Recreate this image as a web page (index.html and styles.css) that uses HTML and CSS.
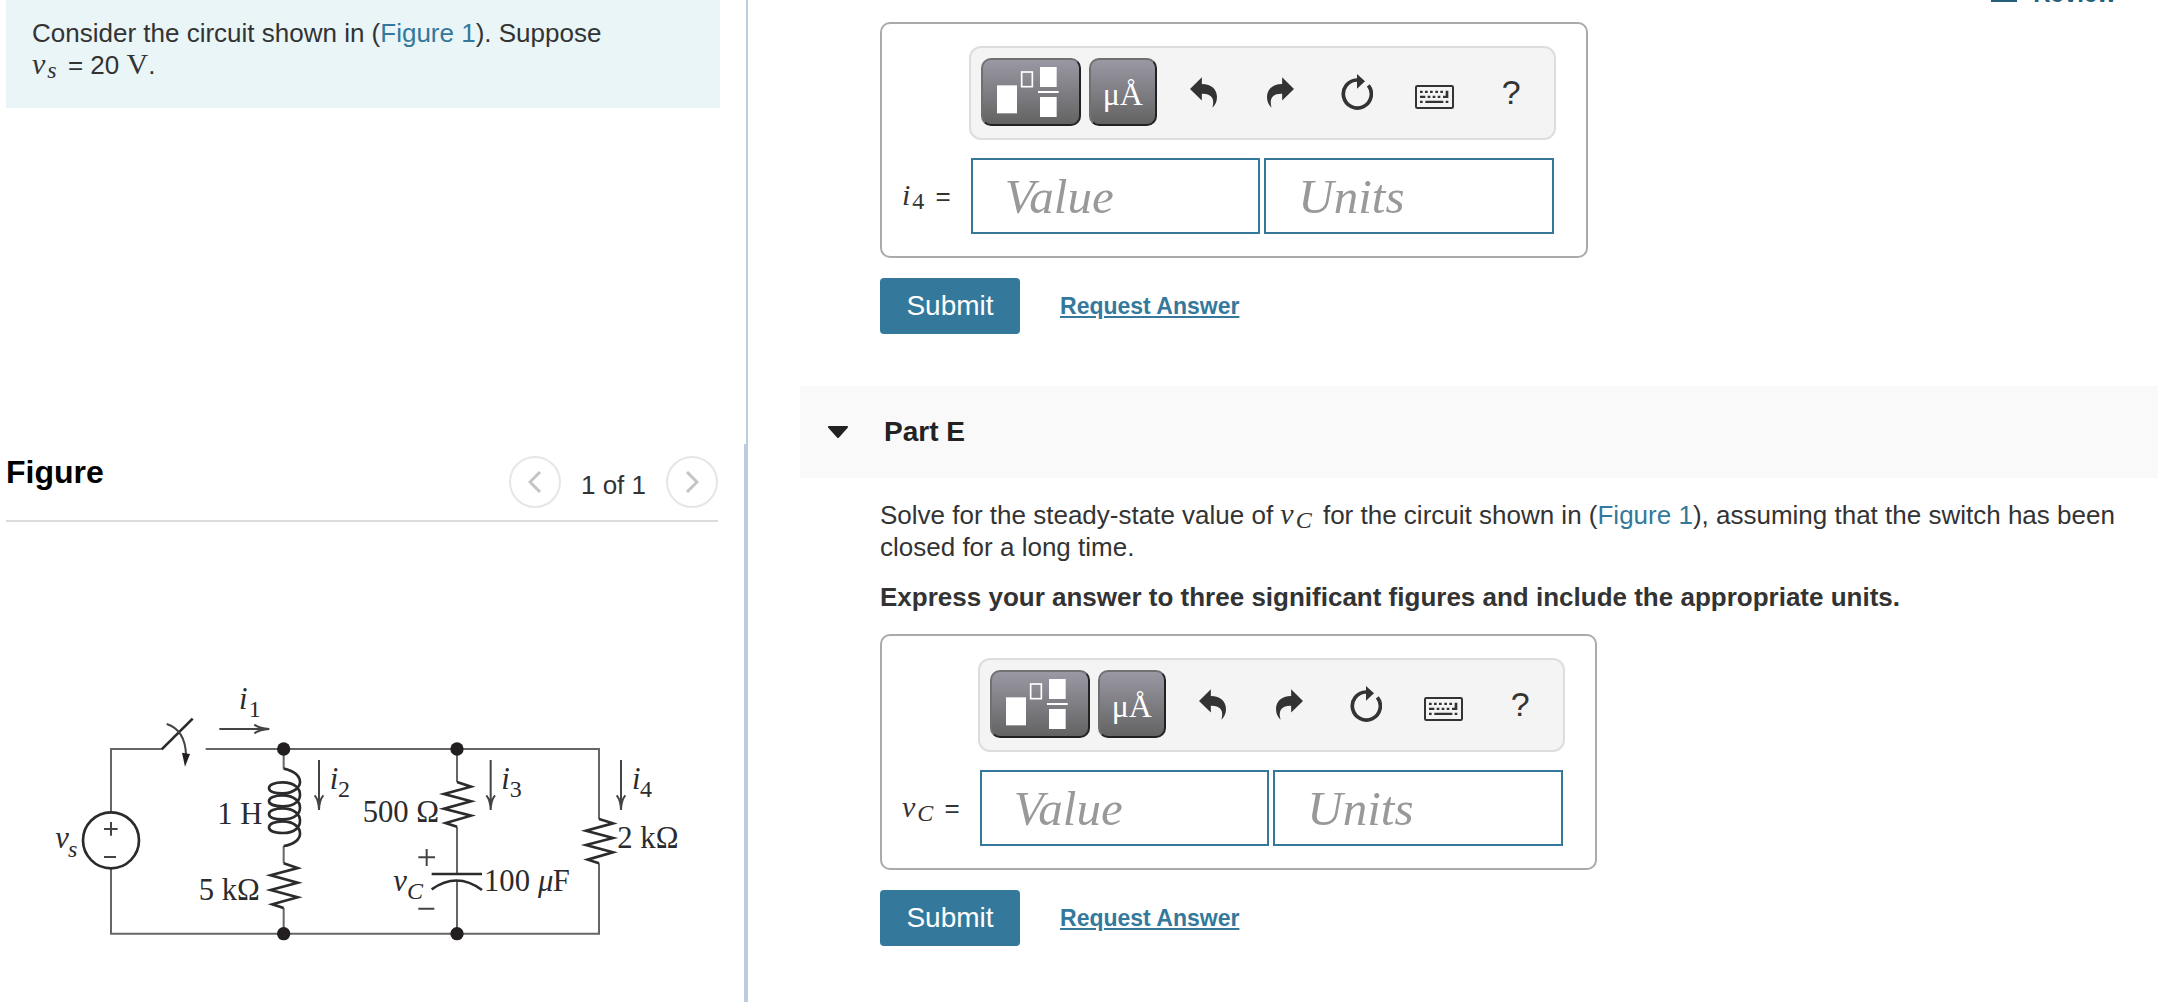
FILE: index.html
```
<!DOCTYPE html>
<html lang="en">

<head>
    <meta charset="UTF-8">
    <meta name="viewport" content="width=device-width, initial-scale=1.0">
    <title>Circuit problem</title>
    <link rel="stylesheet" href="styles.css">
</head>

<body>
    <!-- shared toolbar icons -->
    <svg class="sprite" aria-hidden="true">
        <symbol id="icon-template" viewBox="0 0 204 150">
            <rect x="0" y="55" width="60" height="84" fill="#fff" />
            <rect x="74" y="15" width="32" height="44" fill="none" stroke="#fff" stroke-width="5" />
            <rect x="129" y="0" width="50" height="60" fill="#fff" />
            <rect x="123" y="72" width="62" height="6" fill="#fff" />
            <rect x="129" y="90" width="50" height="60" fill="#fff" />
        </symbol>
        <symbol id="icon-undo" viewBox="0 0 82 92">
            <path d="M0 35L36 0V20C66 20 82 38 82 60C82 74 77 84 68 92C76 66 66 49 36 50V70Z" />
        </symbol>
        <symbol id="icon-redo" viewBox="0 0 82 92">
            <path d="M82 35L46 0V20C16 20 0 38 0 60C0 74 5 84 14 92C6 66 16 49 46 50V70Z" />
        </symbol>
        <symbol id="icon-reset" viewBox="0 0 96 108">
            <path d="M82 34A42 42 0 1 1 48 18" fill="none" stroke="#333" stroke-width="11" />
            <path d="M48 0L72 22L48 44Z" />
        </symbol>
        <symbol id="icon-keyboard" viewBox="0 0 117 72">
            <rect x="3" y="3" width="111" height="66" rx="4" fill="none" stroke="#333" stroke-width="6" />
            <path d="M15 17h8v7h-8zM30 17h8v7h-8zM45 17h8v7h-8zM61 17h8v7h-8zM76 17h8v7h-8zM92 17h8v22h-16v-7h8z" />
            <path d="M15 32h16v7h-16zM38 32h8v7h-8zM53 32h8v7h-8zM68 32h8v7h-8z" />
            <path d="M15 47h8v7h-8zM31 47h54v7h-54zM92 47h8v7h-8z" />
        </symbol>
    </svg>

    <div class="app">
        <div class="left">
            <div class="question">
                <p class="intro">
                    Consider the circuit shown in (<a href="#figure">Figure 1</a>). Suppose
                    <br>
                    <span class="math">v<sub>s</sub></span> = 20 <span class="unit">V</span>.
                </p>
            </div>
            <div class="figure" id="figure">
                <div class="figure-header">
                    <h2>Figure</h2>
                    <div class="pager">
                        <button type="button" class="round" aria-label="Previous figure">
                            <svg viewBox="0 0 14 22" width="14" height="22"><path d="M12 1L2 11L12 21" /></svg>
                        </button>
                        <span>1 of 1</span>
                        <button type="button" class="round" aria-label="Next figure">
                            <svg viewBox="0 0 14 22" width="14" height="22"><path d="M2 1L12 11L2 21" /></svg>
                        </button>
                    </div>
                </div>
                <svg class="circuit" viewBox="0 0 1980 870" role="img" aria-label="RLC circuit with a switch">
                    <!-- wires -->
                    <g class="wire">
                        <path d="M213 425V237H365M497 237H1677V447M1677 580V791H213V597" />
                        <path d="M731 237V296M731 528V580M731 714V791" />
                        <path d="M1251 237V336M1251 470V610M1251 632V791" />
                    </g>
                    <!-- source, switch, coil, resistors, capacitor -->
                    <g class="part">
                        <circle cx="213" cy="511" r="84" />
                        <path d="M365 238L458 146" />
                        <path d="M731 296C762 302 780 318 780 336C780 350 764 370 728 370C702 370 687 364 687 354C687 344 704 337 728 337C764 337 780 356 780 374C780 392 764 409 728 409C702 409 687 402 687 393C687 383 704 376 728 376C764 376 780 396 780 413C780 431 764 448 728 448C702 448 687 442 687 432C687 422 704 415 728 415C764 415 780 435 780 452C780 472 764 489 728 489C702 489 687 482 687 472C687 461 704 454 728 454C764 454 780 474 780 491C780 508 762 523 731 528" />
                        <path d="M731 580L773 594L692 616L773 638L692 660L773 682L697 703L731 714" />
                        <path d="M1251 336L1293 350L1212 372L1293 394L1212 416L1293 437L1217 459L1251 470" />
                        <path d="M1677 447L1719 460L1638 482L1719 504L1638 525L1719 547L1643 569L1677 580" />
                        <path d="M1175 612H1326M1175 658Q1251 604 1326 660" />
                    </g>
                    <!-- arrows and signs -->
                    <g class="thin">
                        <path d="M380 162Q436 180 438 255" />
                        <path d="M538 177H688M643 164Q660 176 688 177Q660 178 643 190" />
                        <path d="M837 270V420M824 376Q836 390 837 420Q838 390 850 376" />
                        <path d="M1352 270V420M1339 376Q1351 390 1352 420Q1353 390 1365 376" />
                        <path d="M1743 270V420M1730 376Q1742 390 1743 420Q1744 390 1756 376" />
                        <path d="M192 477H233M213 456V497M192 561H228" />
                        <path d="M1135 562H1185M1160 537V588M1135 716H1183" />
                    </g>
                    <g class="solid">
                        <path d="M426 248L450 252L435 290Z" />
                        <circle cx="731" cy="237" r="20" />
                        <circle cx="731" cy="791" r="20" />
                        <circle cx="1251" cy="237" r="20" />
                        <circle cx="1251" cy="791" r="20" />
                    </g>
                    <g class="names">
                        <text class="var" x="597" y="118">i</text><text class="sub" x="626" y="142">1</text>
                        <text class="var" x="869" y="357">i</text><text class="sub" x="894" y="382">2</text>
                        <text class="var" x="1384" y="357">i</text><text class="sub" x="1409" y="382">3</text>
                        <text class="var" x="1776" y="357">i</text><text class="sub" x="1800" y="382">4</text>
                        <text class="var" x="46" y="533">v</text><text class="sub var" x="84" y="562">s</text>
                        <text class="var" x="1060" y="664">v</text><text class="sub var" x="1101" y="688">C</text>
                        <text x="532" y="462">1 H</text>
                        <text x="476" y="689">5 kΩ</text>
                        <text x="968" y="455">500 Ω</text>
                        <text x="1732" y="533">2 kΩ</text>
                        <text x="1332" y="664">100</text>
                        <text class="var" x="1494" y="664">μ</text>
                        <text x="1538" y="664">F</text>
                    </g>
                </svg>
            </div>
        </div>

        <div class="right">
            <div class="tools">
                <a href="#review" class="review">
                    <svg viewBox="0 0 26 24" width="26" height="24" aria-hidden="true"><path d="M0 0H26V24H0Z" /></svg>
                    Review
                </a>
            </div>

            <div class="part-body">
                <form class="answer">
                    <div class="toolbar">
                        <button type="button" class="dark wide" aria-label="Templates"><svg width="68" height="50"><use href="#icon-template" /></svg></button>
                        <button type="button" class="dark">μÅ</button>
                        <div class="actions">
                            <button type="button" aria-label="Undo"><svg width="27" height="31"><use href="#icon-undo" /></svg></button>
                            <button type="button" aria-label="Redo"><svg width="27" height="31"><use href="#icon-redo" /></svg></button>
                            <button type="button" aria-label="Reset"><svg width="32" height="36"><use href="#icon-reset" /></svg></button>
                            <button type="button" class="keyboard" aria-label="Keyboard shortcuts"><svg width="39" height="24"><use href="#icon-keyboard" /></svg></button>
                            <button type="button">?</button>
                        </div>
                    </div>
                    <label for="i4-value"><span class="math">i<sub class="num">4</sub></span> =</label>
                    <div class="fields">
                        <input type="text" id="i4-value" placeholder="Value">
                        <input type="text" id="i4-units" placeholder="Units" aria-label="Units">
                    </div>
                </form>
                <div class="submit-row">
                    <button type="button" class="submit">Submit</button>
                    <a href="#answer-d">Request Answer</a>
                </div>
            </div>

            <div class="part-header">
                <svg viewBox="0 0 20 12" width="20" height="12" aria-hidden="true"><path d="M1 1H19L10 11Z" /></svg>
                <h2>Part E</h2>
            </div>

            <div class="part-body">
                <p>Solve for the steady-state value of <span class="math">v<sub>C</sub></span> for the circuit shown in (<a href="#figure">Figure 1</a>), assuming that the switch has been closed for a long time.</p>
                <p class="instructions">Express your answer to three significant figures and include the appropriate units.</p>
                <form class="answer">
                    <div class="toolbar">
                        <button type="button" class="dark wide" aria-label="Templates"><svg width="68" height="50"><use href="#icon-template" /></svg></button>
                        <button type="button" class="dark">μÅ</button>
                        <div class="actions">
                            <button type="button" aria-label="Undo"><svg width="27" height="31"><use href="#icon-undo" /></svg></button>
                            <button type="button" aria-label="Redo"><svg width="27" height="31"><use href="#icon-redo" /></svg></button>
                            <button type="button" aria-label="Reset"><svg width="32" height="36"><use href="#icon-reset" /></svg></button>
                            <button type="button" class="keyboard" aria-label="Keyboard shortcuts"><svg width="39" height="24"><use href="#icon-keyboard" /></svg></button>
                            <button type="button">?</button>
                        </div>
                    </div>
                    <label for="vc-value"><span class="math">v<sub>C</sub></span> =</label>
                    <div class="fields">
                        <input type="text" id="vc-value" placeholder="Value">
                        <input type="text" id="vc-units" placeholder="Units" aria-label="Units">
                    </div>
                </form>
                <div class="submit-row">
                    <button type="button" class="submit">Submit</button>
                    <a href="#answer-e">Request Answer</a>
                </div>
            </div>
        </div>
    </div>
</body>

</html>
```
FILE: styles.css
```
* {
    box-sizing: border-box;
}

body {
    margin: 0;
    background-color: #fff;
    color: #333;
    font-family: "Liberation Sans", Arial, sans-serif;
    font-size: 26px;
    line-height: 32px;
}

p,
h2 {
    margin: 0;
}

a {
    color: #34799b;
    text-decoration: none;
}

button {
    padding: 0;
    border: none;
    font-family: inherit;
    cursor: pointer;
}

button svg {
    display: block;
}

.sprite {
    display: none;
}

.math {
    margin-right: 4px;
    font-family: "Liberation Serif", "Times New Roman", serif;
    font-style: italic;
    font-size: 30px;
    line-height: 1;
}

.math sub {
    font-size: 24px;
    line-height: 0;
    vertical-align: -4px;
    margin-left: 2px;
}

.math .num {
    font-style: normal;
}

.unit {
    font-family: "Liberation Serif", "Times New Roman", serif;
    font-size: 30px;
    line-height: 1;
}

.app {
    display: grid;
    grid-template-columns: 34.25% 1fr;
    height: 100vh;
    overflow: hidden;
}

/* left column */
.left {
    display: flex;
    flex-direction: column;
}

.question {
    height: 444px;
    padding: 0 26px 0 6px;
    border-right: 2px solid #bccbde;
}

.intro {
    padding: 17px 26px 27px;
    background-color: #e9f5f7;
}

.figure {
    flex: 1;
    padding: 0 26px 0 6px;
    border-right: 4px solid #bccbde;
}

.figure-header {
    display: flex;
    justify-content: space-between;
    height: 78px;
    padding-top: 12px;
    border-bottom: 2px solid #ddd;
}

.figure-header h2 {
    color: #000;
    font-size: 32px;
}

.pager {
    display: flex;
    gap: 20px;
}

.pager span {
    padding-top: 13px;
}

.round {
    display: flex;
    align-items: center;
    justify-content: center;
    width: 52px;
    height: 52px;
    border: 2px solid #e6e6e6;
    border-radius: 50%;
    background-color: #fff;
}

.round path {
    fill: none;
    stroke: #c4c4c4;
    stroke-width: 3;
}

.circuit {
    display: block;
    width: 660px;
    max-width: 100%;
    margin: 148px 0 0 34px;
    fill: none;
}

.wire {
    stroke: #666;
    stroke-width: 6;
}

.part {
    stroke: #2b2b2d;
    stroke-width: 8;
}

.thin {
    stroke: #444;
    stroke-width: 6;
}

.solid {
    fill: #231f20;
}

.names {
    fill: #2b2b2d;
    font-family: "Liberation Serif", "Times New Roman", serif;
    font-size: 92px;
}

.names .var {
    font-style: italic;
}

.names .sub {
    font-size: 72px;
}

/* right column */
.right {
    padding: 0 26px 0 52px;
}

.tools {
    display: flex;
    justify-content: flex-end;
    margin: -22px 42px 12px 0;
}

.review {
    display: flex;
    gap: 16px;
    color: #255f79;
    font-size: 24px;
    font-weight: bold;
}

.review svg {
    fill: #255f79;
}

.part-header {
    display: flex;
    align-items: center;
    gap: 36px;
    height: 92px;
    margin: 52px 0 21px;
    padding-left: 28px;
    background-color: #f9f9f9;
}

.part-header h2 {
    color: #222;
    font-size: 28px;
}

.part-header path {
    fill: #222;
    stroke: #222;
    stroke-width: 2;
    stroke-linejoin: round;
}

.part-body {
    padding-left: 80px;
}

.instructions {
    margin: 18px 0 21px;
    font-weight: bold;
}

.answer {
    display: grid;
    grid-template-columns: auto auto;
    align-items: center;
    row-gap: 18px;
    width: fit-content;
    padding: 22px 30px 22px 20px;
    border: 2px solid #aaa;
    border-radius: 10px;
}

.answer label {
    padding-right: 18px;
    white-space: nowrap;
}

.toolbar {
    grid-column: 2;
    display: flex;
    gap: 8px;
    padding: 10px 4px 12px 10px;
    border: 2px solid #ddd;
    border-radius: 12px;
    background-color: #f4f4f4;
}

.dark {
    display: flex;
    align-items: center;
    justify-content: center;
    width: 68px;
    height: 68px;
    padding-top: 4px;
    border: 2px solid #222;
    border-top-color: #707070;
    border-left-color: #707070;
    border-radius: 10px;
    background: linear-gradient(#9a98a3, #636363);
    color: #fff;
    font-family: "Liberation Serif", "Times New Roman", serif;
    font-size: 32px;
}

.wide {
    width: 100px;
    padding: 0;
}

.actions {
    display: flex;
}

.actions button {
    display: flex;
    align-items: center;
    justify-content: center;
    width: 77px;
    background: none;
    color: #333;
    font-size: 34px;
}

.actions svg {
    fill: #333;
}

.actions .keyboard {
    padding-top: 10px;
}

.fields {
    display: flex;
    gap: 4px;
    padding: 0 2px;
}

.fields input {
    flex: 1;
    width: 0;
    height: 76px;
    padding: 0 32px;
    border: 2px solid #34799b;
    border-radius: 0;
    font-family: "Liberation Serif", "Times New Roman", serif;
    font-size: 49px;
}

.fields input::placeholder {
    color: #999;
    font-style: italic;
}

.submit-row {
    display: flex;
    align-items: center;
    gap: 40px;
    margin-top: 20px;
}

.submit {
    width: 140px;
    height: 56px;
    border-radius: 4px;
    background-color: #34799b;
    color: #fff;
    font-size: 28px;
}

.submit-row a {
    font-size: 23px;
    font-weight: bold;
    text-decoration: underline;
}
```
